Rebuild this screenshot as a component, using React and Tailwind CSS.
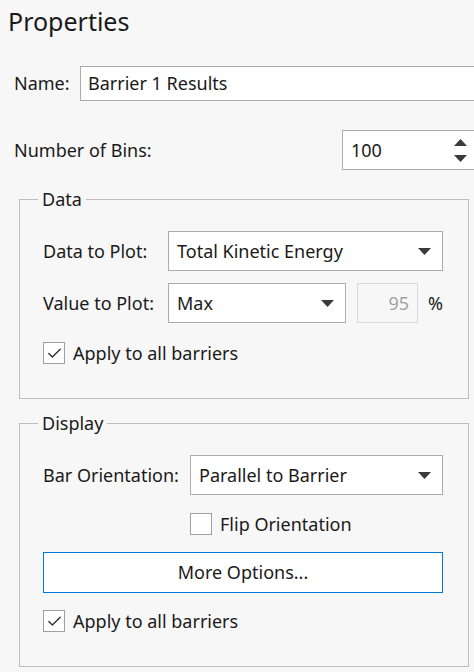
import { Check } from 'lucide-react'

const font = { fontFamily: '"Noto Sans", "Open Sans", sans-serif' }

function Caret() {
  return (
    <svg width="13" height="7" viewBox="0 0 13 7" className="shrink-0">
      <path d="M0 0 H13 L6.5 7 Z" fill="#3a3a3a" />
    </svg>
  )
}

function Select({ value, className }) {
  return (
    <div
      className={`flex h-[40px] items-center justify-between border border-[#acacac] bg-white pl-[8px] pr-[11px] ${className}`}
    >
      <span className="whitespace-nowrap">{value}</span>
      <Caret />
    </div>
  )
}

function CheckBox({ checked }) {
  return (
    <div className="flex h-[22px] w-[22px] shrink-0 items-center justify-center border border-[#9f9f9f] bg-white">
      {checked ? <Check size={17} strokeWidth={1.8} color="#2b2b2b" /> : null}
    </div>
  )
}

function Group({ title, children, className }) {
  return (
    <div className={`relative ml-[19px] w-[450px] border border-[#bdbdbd] ${className}`}>
      <span className="absolute -top-[14px] left-[18px] bg-[#f7f7f7] px-[4px] leading-[26px]">{title}</span>
      {children}
    </div>
  )
}

export default function App() {
  return (
    <div
      className="h-[672px] w-[474px] overflow-hidden bg-[#f7f7f7] text-[18px] text-[#1a1a1a]"
      style={font}
    >
      <h1 className="pl-[8px] pt-[1px] text-[25px] leading-[40px]">Properties</h1>

      <div className="mt-[25px] flex items-center pl-[14px]">
        <span className="w-[66px] shrink-0">Name:</span>
        <div className="flex h-[35px] w-[420px] shrink-0 items-center border border-[#acacac] bg-white pl-[7px]">
          Barrier 1 Results
        </div>
      </div>

      <div className="mt-[29px] flex items-center pl-[14px]">
        <span className="w-[328px] shrink-0">Number of Bins:</span>
        <div className="flex h-[40px] w-[150px] shrink-0 items-center border border-[#acacac] bg-white pl-[8px]">
          <span className="w-[103px]">100</span>
          <div className="flex flex-col gap-[9px]">
            <svg width="13" height="7" viewBox="0 0 13 7">
              <path d="M0 7 H13 L6.5 0 Z" fill="#3a3a3a" />
            </svg>
            <svg width="13" height="7" viewBox="0 0 13 7">
              <path d="M0 0 H13 L6.5 7 Z" fill="#3a3a3a" />
            </svg>
          </div>
        </div>
      </div>

      <Group title="Data" className="mt-[29px] h-[200px]">
        <div className="flex flex-col pl-[23px] pr-[25px] pt-[31px]">
          <div className="flex items-center">
            <span className="w-[125px] shrink-0">Data to Plot:</span>
            <Select value="Total Kinetic Energy" className="flex-1" />
          </div>
          <div className="mt-[12px] flex items-center">
            <span className="w-[125px] shrink-0">Value to Plot:</span>
            <Select value="Max" className="w-[178px] shrink-0" />
            <div className="ml-[11px] flex h-[40px] w-[61px] shrink-0 items-center justify-end border border-[#d9d9d9] pr-[8px] text-[#a3a3a3]">
              95
            </div>
            <span className="ml-auto">%</span>
          </div>
          <div className="mt-[19px] flex h-[22px] items-center gap-[8px] leading-[22px]">
            <CheckBox checked />
            <span>Apply to all barriers</span>
          </div>
        </div>
      </Group>

      <Group title="Display" className="mt-[24px] h-[244px]">
        <div className="flex flex-col pl-[23px] pr-[25px] pt-[31px]">
          <div className="flex items-center">
            <span className="w-[147px] shrink-0">Bar Orientation:</span>
            <Select value="Parallel to Barrier" className="flex-1" />
          </div>
          <div className="mt-[18px] flex h-[22px] items-center gap-[8px] pl-[147px] leading-[22px]">
            <CheckBox />
            <span>Flip Orientation</span>
          </div>
          <div className="mt-[17px] flex h-[41px] items-center justify-center border border-[#0078d7] bg-white">
            More Options...
          </div>
          <div className="mt-[17px] flex h-[22px] items-center gap-[8px] leading-[22px]">
            <CheckBox checked />
            <span>Apply to all barriers</span>
          </div>
        </div>
      </Group>
    </div>
  )
}
